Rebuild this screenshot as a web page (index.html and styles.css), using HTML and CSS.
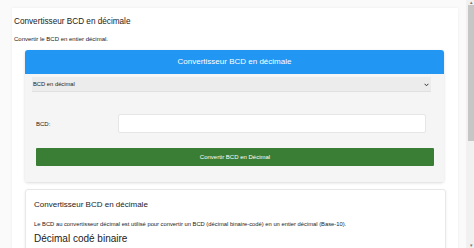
FILE: index.html
```html
<!DOCTYPE html>
<html>

<head>
	<meta charset="UTF-8">
	<meta name="viewport" content="width=device-width, initial-scale=1">
	<title>Convertisseur BCD en décimale</title>
	<link rel="stylesheet" href="styles.css">
</head>

<body>
	<main class="page">
		<h1 class="title">Convertisseur BCD en décimale</h1>
		<p class="subtitle">Convertir le BCD en entier décimal.</p>

		<section class="converter">
			<div class="converter-header">Convertisseur BCD en décimale</div>
			<div class="converter-body">
				<div class="select-wrap">
					<select class="mode-select">
						<option>BCD en décimal</option>
						<option>Décimal en BCD</option>
					</select>
					<svg class="select-arrow" width="5" height="4" viewBox="0 0 5 4">
						<path d="M0.6 0.8 L2.5 2.8 L4.4 0.8" fill="none" stroke="#333" stroke-width="1"/>
					</svg>
				</div>
				<div class="form-body">
					<div class="field-row">
						<label class="field-label" for="bcd">BCD:</label>
						<input class="field-input" id="bcd" type="text">
					</div>
					<button class="convert-button">Convertir BCD en Décimal</button>
				</div>
			</div>
		</section>

		<section class="info-card">
			<h2 class="info-title">Convertisseur BCD en décimale</h2>
			<p class="info-text">Le BCD au convertisseur décimal est utilisé pour convertir un BCD (décimal binaire-codé) en un entier décimal (Base-10).</p>
			<h3 class="info-subtitle">Décimal codé binaire</h3>
			<p class="info-text">Le décimal codé binaire (BCD) représente chaque chiffre décimal par un groupe de quatre bits.</p>
		</section>
	</main>

	<div class="scrollbar">
		<span class="scroll-arrow">▴</span>
		<div class="scroll-thumb"></div>
		<div class="scroll-track"></div>
		<span class="scroll-arrow">▾</span>
	</div>
</body>

</html>
```

FILE: styles.css
```css
html {
	background-color: #fafafa;
}

body {
	margin: 0;
	height: 248px;
	overflow: hidden;
	display: flex;
	align-items: flex-start;
	font-family: "Liberation Sans", Arial, Helvetica, sans-serif;
	color: #222;
}

.page {
	width: 446px;
	margin: 8px 8px 0 12px;
	padding: 1px 0 20px;
	background-color: white;
	box-shadow: 0 0 3px rgba(0, 0, 0, 0.06);
}

.title {
	margin: 7px 0 0 2px;
	font-size: 8.2px;
	line-height: 12px;
	font-weight: normal;
}

.subtitle {
	margin: 7px 0 0 2px;
	font-size: 6px;
	line-height: 8px;
}

.converter {
	margin: 7px 14px 0 13px;
	border-radius: 3px;
	box-shadow: 0 1px 3px rgba(0, 0, 0, 0.15);
}

.converter-header {
	height: 24px;
	line-height: 24px;
	text-align: center;
	font-size: 8px;
	color: white;
	background-color: #2196f3;
	border-radius: 3px 3px 0 0;
}

.converter-body {
	padding: 3px 13px 16px 7px;
	background-color: #f5f5f5;
	border-radius: 0 0 3px 3px;
}

.select-wrap {
	position: relative;
}

.mode-select {
	display: block;
	width: 100%;
	height: 15px;
	padding: 0 0 0 1px;
	font-family: inherit;
	font-size: 5.8px;
	color: #222;
	background-color: #ececec;
	border: none;
	border-bottom: 1px solid #e0e0e0;
	border-radius: 0;
	appearance: none;
	-webkit-appearance: none;
}

.select-arrow {
	position: absolute;
	right: 2px;
	top: 6px;
}

.form-body {
	margin: 0 -3px 0 4px;
}

.field-row {
	display: flex;
	align-items: center;
	margin-top: 22px;
}

.field-label {
	width: 82px;
	font-size: 6px;
	padding-top: 1px;
}

.field-input {
	flex: 1;
	height: 19px;
	margin-right: 8px;
	box-sizing: border-box;
	border: 1px solid #e6e6e6;
	border-radius: 2px;
	background-color: white;
}

.convert-button {
	display: block;
	width: 100%;
	height: 18px;
	margin-top: 15px;
	font-family: inherit;
	font-size: 6px;
	color: white;
	background-color: #3a7d34;
	border: none;
	border-radius: 1px;
}

.info-card {
	margin: 7px 12px 0 13px;
	padding: 6px 8px 10px;
	border: 1px solid #e8e8e8;
	border-radius: 3px;
	box-shadow: 0 1px 3px rgba(0, 0, 0, 0.08);
}

.info-title {
	margin: 3px 0 0;
	font-size: 8px;
	line-height: 12px;
	font-weight: normal;
}

.info-text {
	margin: 9px 0 0;
	font-size: 5.8px;
	line-height: 8px;
}

.info-subtitle {
	margin: 5px 0 0;
	font-size: 10px;
	line-height: 12px;
	font-weight: normal;
}

.scrollbar {
	width: 8px;
	height: 248px;
	display: flex;
	flex-direction: column;
	align-items: flex-end;
	background-color: #f1f1f1;
}

.scroll-arrow {
	width: 6px;
	height: 5px;
	font-size: 5px;
	line-height: 5px;
	text-align: center;
	color: #777;
}

.scroll-thumb {
	width: 6px;
	height: 136px;
	background-color: #c6c6c6;
}

.scroll-track {
	flex: 1;
}
```
